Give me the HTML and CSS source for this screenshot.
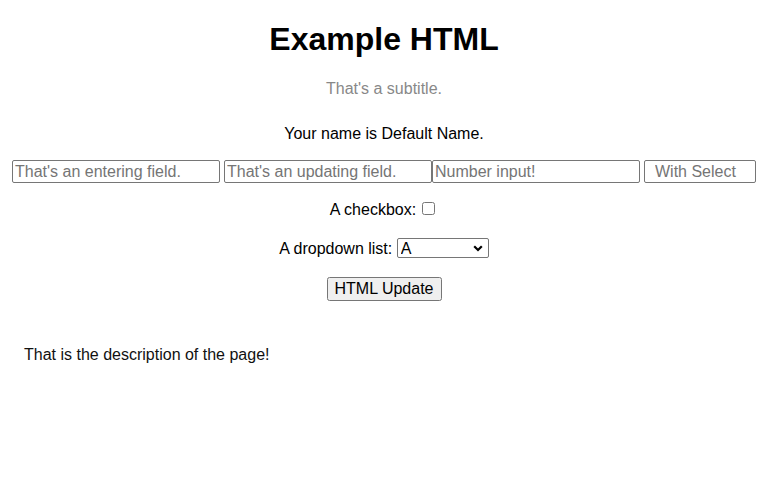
FILE: index.html
```html
<!DOCTYPE html>
<html lang="en">
<head>
  <meta charset="UTF-8" />
  <meta name="viewport" content="width=device-width, initial-scale=1.0"/>
  <title>Example HTML</title>
  <link rel="stylesheet" href="styles.css">
</head>
<body>

  <div class="page">
    <h1 class="titel">Example HTML</h1>
    <p class="subtitle">That's a subtitle.</p>
    <p class="greeting">Your name is <span id="nameOut">Default Name</span>.</p>

    <div class="fields">
      <input class="field" type="text" placeholder="That's an entering field.">
      <input class="field field-gap" type="text" placeholder="That's an updating field.">
      <input class="field" type="number" placeholder="Number input!">
      <input class="field field-gap field-short" type="text" placeholder="With Select">
    </div>

    <p class="row">A checkbox:<input type="checkbox" class="check"></p>

    <p class="row">A dropdown list:
      <select class="dropdown">
        <option>A</option>
        <option>B</option>
        <option>C</option>
      </select>
    </p>

    <div class="actions">
      <button class="update-btn" type="button">HTML Update</button>
    </div>
  </div>

  <p class="description">That is the description of the page!</p>

</body>
</html>
```

FILE: styles.css
```css
* {
  box-sizing: border-box;
}

body {
  margin: 0;
  padding: 0 8px;
  font-family: "Liberation Sans", Arial, sans-serif;
  font-size: 16px;
  color: #000;
  background: #fff;
}

.page {
  text-align: center;
  padding-top: 21px;
}

.titel {
  margin: 0 0 22px;
  font-size: 32px;
  font-weight: bold;
}

.subtitle {
  margin: 0 0 27px;
  color: #888;
}

.greeting {
  margin: 0 0 17px;
}

.fields {
  display: flex;
  justify-content: center;
  margin-bottom: 16px;
}

.field {
  width: 208px;
  height: 23px;
  padding: 1px 2px;
  font-family: inherit;
  font-size: 16px;
  color: #000;
  border: 1px solid #767676;
  border-radius: 2px;
  background: #fff;
}

.field::placeholder {
  color: #757575;
}

.field-gap {
  margin-left: 4px;
}

.field-short {
  width: 112px;
  padding-left: 10px;
}

.row {
  margin: 0 0 19px;
}

.check {
  width: 13px;
  height: 13px;
  margin: 3px 3px 3px 6px;
}

/* Pfeil selbst gezeichnet, damit er wie der Chevron aussieht */
.dropdown {
  appearance: none;
  width: 92px;
  height: 20px;
  padding: 0 18px 0 3px;
  font-family: inherit;
  font-size: 16px;
  color: #000;
  border: 1px solid #767676;
  border-radius: 2px;
  background: #fff url("data:image/svg+xml,%3Csvg xmlns='http://www.w3.org/2000/svg' width='10' height='7' viewBox='0 0 10 7'%3E%3Cpath d='M1.2 1.2 5 5 8.8 1.2' fill='none' stroke='%23000' stroke-width='2.2'/%3E%3C/svg%3E") no-repeat right 5px center;
}

.actions {
  margin-bottom: 45px;
}

.update-btn {
  font-family: inherit;
  font-size: 16px;
  padding: 1px 6px;
}

.description {
  margin: 0;
  padding-left: 16px;
  color: #111;
}
```
